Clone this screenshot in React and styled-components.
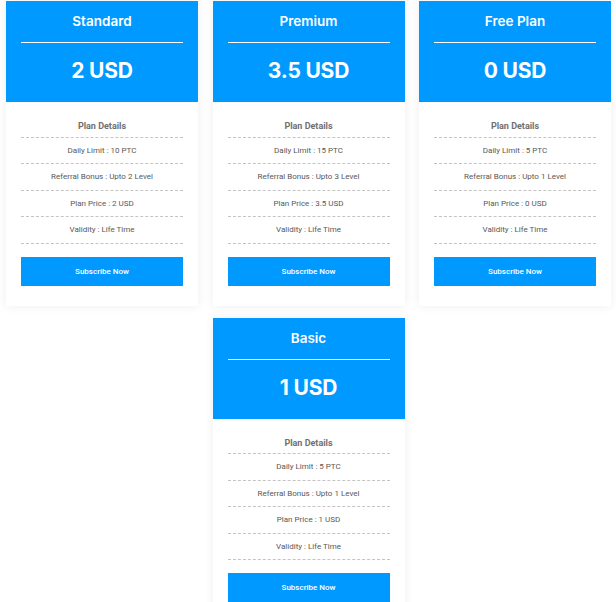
import styled, { createGlobalStyle } from "styled-components";

const GlobalStyle = createGlobalStyle`
  body {
    margin: 0;
    background: #ffffff;
    font-family: Roboto, "Liberation Sans", sans-serif;
  }
`;

const PlanGrid = styled.div`
  display: flex;
  flex-wrap: wrap;
  justify-content: center;
  column-gap: 14.5px;
  row-gap: 12px;
  padding: 1px 0 0 1px;
`;

const Card = styled.div`
  width: 192px;
  background: #ffffff;
  box-shadow: 0 0 10px rgba(0, 0, 0, 0.07);
`;

const CardHeader = styled.div`
  background: #0099ff;
  color: #ffffff;
  padding: 11px 15px 11px;
  text-align: center;
  font-family: Inter, "Open Sans", sans-serif;
`;

const PlanName = styled.h3`
  margin: 0;
  font-size: 13.5px;
  font-weight: 600;
  line-height: 19px;
  padding-bottom: 11px;
  border-bottom: 1px solid #ffffff;
`;

const Price = styled.div`
  font-size: 21px;
  font-weight: 700;
  line-height: 40px;
  padding-top: 8px;
  letter-spacing: -0.2px;
`;

const CardBody = styled.div`
  padding: 9px 15px 20px;
  text-align: center;
`;

const DetailRow = styled.div`
  height: 26.5px;
  line-height: ${(p) => (p.$title ? "22px" : "26px")};
  padding-top: ${(p) => (p.$title ? "4px" : "0")};
  box-sizing: border-box;
  border-bottom: 1px dashed #c4c4c4;
  font-size: ${(p) => (p.$title ? "9px" : "8px")};
  font-weight: ${(p) => (p.$title ? 700 : 400)};
  color: ${(p) => (p.$title ? "#707070" : "#585858")};
`;

const SubscribeButton = styled.button`
  display: block;
  width: 100%;
  height: 29px;
  margin-top: 13px;
  border: none;
  background: #0099ff;
  color: #ffffff;
  font-family: Roboto, "Liberation Sans", sans-serif;
  font-size: 8px;
  font-weight: 500;
  cursor: pointer;
`;

const plans = [
  { name: "Standard", price: "2 USD", limit: "10 PTC", level: "2", cost: "2 USD" },
  { name: "Premium", price: "3.5 USD", limit: "15 PTC", level: "3", cost: "3.5 USD" },
  { name: "Free Plan", price: "0 USD", limit: "5 PTC", level: "1", cost: "0 USD" },
  { name: "Basic", price: "1 USD", limit: "5 PTC", level: "1", cost: "1 USD" },
];

const App = () => {
  return (
    <>
      <GlobalStyle />
      <PlanGrid>
        {plans.map((plan) => (
          <Card key={plan.name}>
            <CardHeader>
              <PlanName>{plan.name}</PlanName>
              <Price>{plan.price}</Price>
            </CardHeader>
            <CardBody>
              <DetailRow $title>Plan Details</DetailRow>
              <DetailRow>Daily Limit : {plan.limit}</DetailRow>
              <DetailRow>Referral Bonus : Upto {plan.level} Level</DetailRow>
              <DetailRow>Plan Price : {plan.cost}</DetailRow>
              <DetailRow>Validity : Life Time</DetailRow>
              <SubscribeButton>Subscribe Now</SubscribeButton>
            </CardBody>
          </Card>
        ))}
      </PlanGrid>
    </>
  );
};

export default App;
